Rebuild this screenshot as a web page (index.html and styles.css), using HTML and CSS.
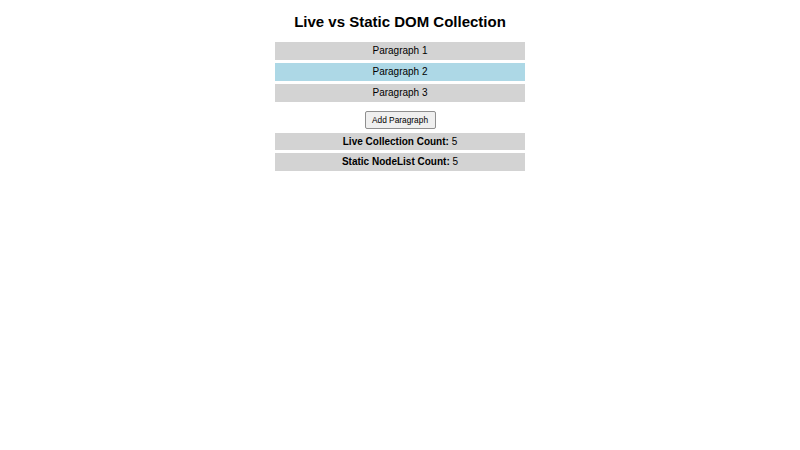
FILE: index.html
```html
<!DOCTYPE html>
<html>
<head>
<meta charset="utf-8">
<link rel="stylesheet" href="styles.css">
</head>
<body>
<div class="wrap">
  <h1 class="title">Live vs Static DOM Collection</h1>
  <div class="list">
    <p class="item">Paragraph 1</p>
    <p class="item active">Paragraph 2</p>
    <p class="item">Paragraph 3</p>
  </div>
  <div class="actions"><button class="btn">Add Paragraph</button></div>
  <div class="counts">
    <div class="count"><strong>Live Collection Count:</strong> 5</div>
    <div class="count"><strong>Static NodeList Count:</strong> 5</div>
  </div>
</div>
</body>
</html>
```
FILE: styles.css
```css
html, body { margin: 0; padding: 0; background: #fff; }
body { font-family: "Liberation Sans", Arial, sans-serif; color: #000; }
.wrap { width: 250px; margin: 0 auto; padding-top: 12.5px; display: flex; flex-direction: column; }
.title { font-size: 15px; font-weight: bold; margin: 0 0 11.5px; text-align: center; white-space: nowrap; line-height: 18px; }
.list { display: flex; flex-direction: column; gap: 3.125px; }
.item { margin: 0; background: #d3d3d3; text-align: center; font-size: 10px; height: 17.75px; line-height: 17.75px; }
.item.active { background: #add8e6; }
.actions { display: flex; justify-content: center; padding-top: 9.5px; padding-bottom: 4px; }
.btn { font-family: "Liberation Sans", Arial, sans-serif; font-size: 8.33px; line-height: 10px; height: 17.5px; width: 71px; padding: 0; background: #efefef; border: 1px solid #8f8f8f; border-radius: 2px; color: #000; }
.counts { display: flex; flex-direction: column; gap: 3.125px; }
.count { background: #d3d3d3; text-align: center; font-size: 10px; height: 17.75px; line-height: 17.75px; }
```
